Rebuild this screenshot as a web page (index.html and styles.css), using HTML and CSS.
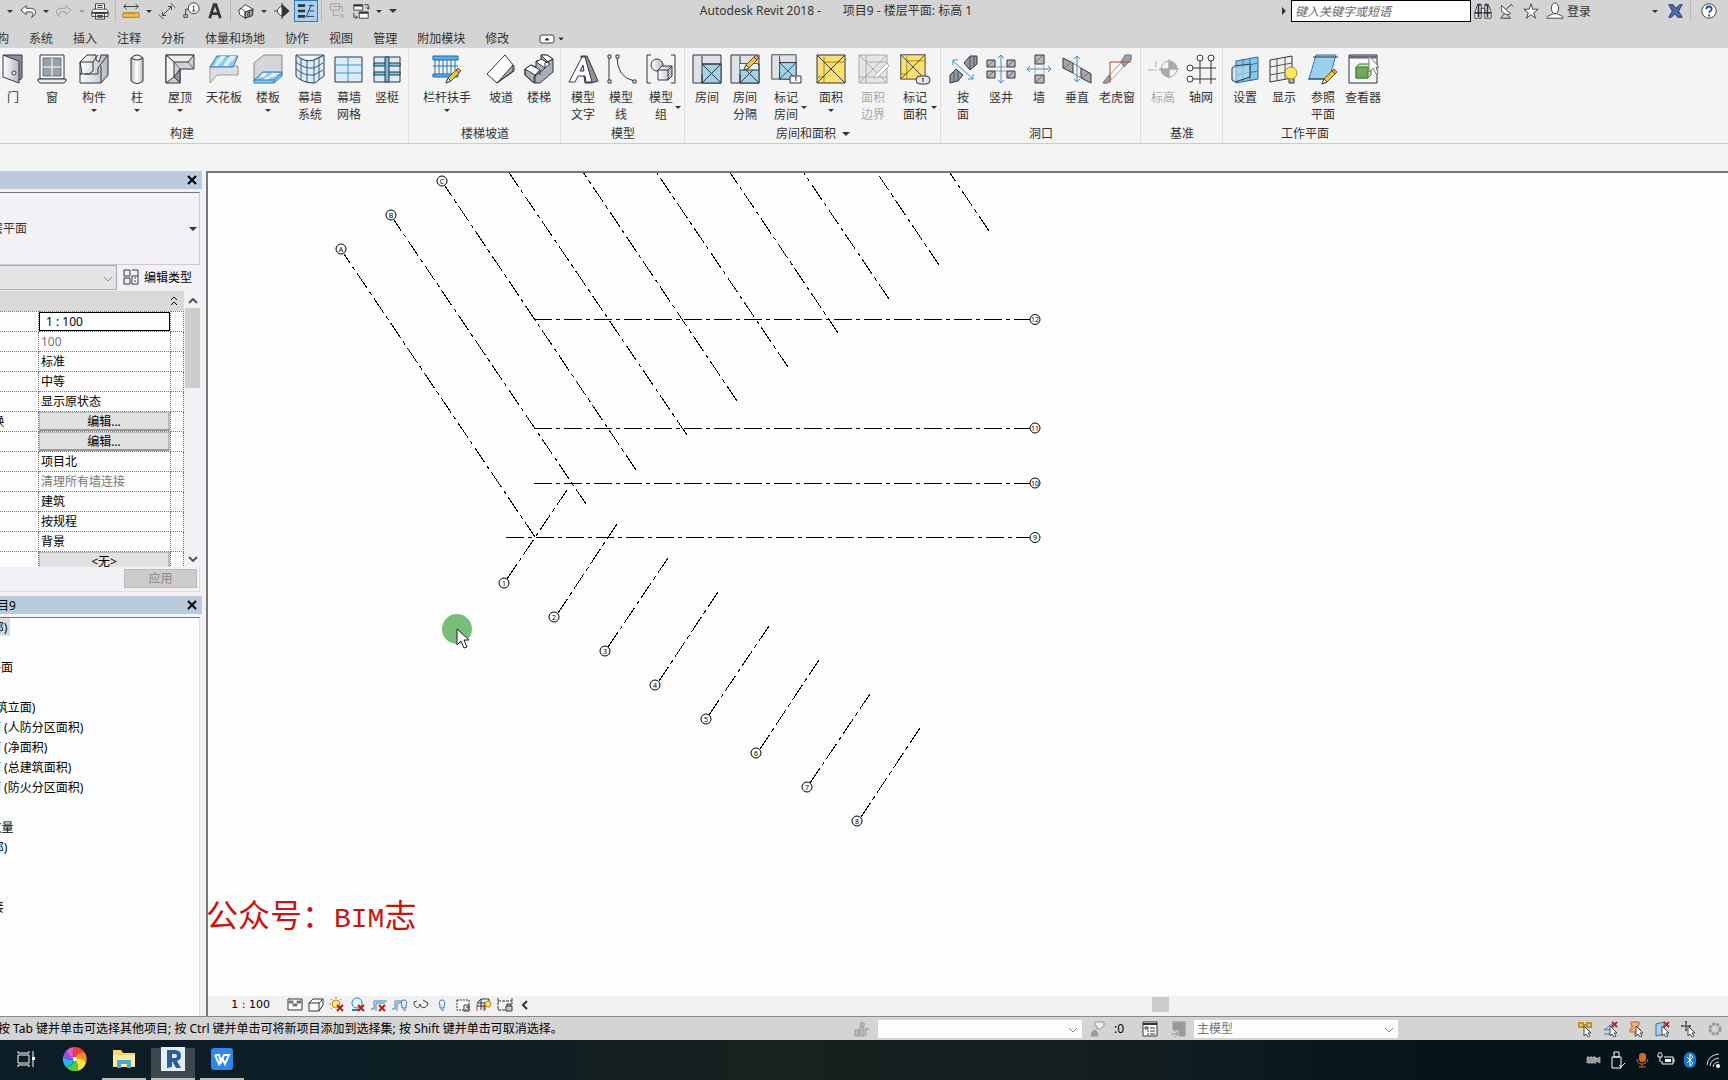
FILE: index.html
```
<!DOCTYPE html>
<html lang="zh-CN">
<head>
    <meta charset="UTF-8">
    <meta name="viewport" content="width=device-width, initial-scale=1.0">
    <title>Autodesk Revit 2018</title>
    <link rel="stylesheet" href="styles.css">
</head>
<body>
    <header class="titlebar">
        <div class="quick-access">
            <button class="drop" aria-label="打开选项"></button>
            <button class="quick" aria-label="放弃"><svg viewBox="0 0 20 20"><path d="M8 4L2 9l6 5v-3h5c3 0 3 3 1 6 6-3 6-10-1-10H8z" fill="#fff"/></svg></button>
            <button class="drop" aria-label="放弃选项"></button>
            <button class="quick faded" aria-label="重做"><svg viewBox="0 0 20 20"><path d="M12 4l6 5-6 5v-3H7c-3 0-3 3-1 6-6-3-6-10 1-10h5z"/></svg></button>
            <button class="drop faded" aria-label="重做选项"></button>
            <button class="quick" aria-label="打印"><svg viewBox="0 0 20 20"><path d="M5 8V2h10v6M3 8h14l2 2v6H1v-6zM5 13h10v6H5z" fill="#fff"/><path d="M1 12h18" stroke-width="2"/><path d="M7 4h6M7 6h6M7 15h6M7 17h6"/></svg></button>
            <i class="divider"></i>
            <button class="quick" aria-label="测量"><svg viewBox="0 0 20 20"><path d="M2 5h16M5 2L2 5l3 3M15 2l3 3-3 3"/><path d="M1 12h18v5H1z" fill="#f5c33b" stroke="#a97613"/><path d="M5 12v2M8 12v2M11 12v2M14 12v2" stroke="#a97613"/></svg></button>
            <button class="drop" aria-label="测量选项"></button>
            <button class="quick" aria-label="对齐尺寸标注"><svg viewBox="0 0 20 20"><path d="M5 15L15 5M5 11v4h4M11 5h4v4M1 14l5 5M14 1l5 5"/></svg></button>
            <button class="quick" aria-label="按类别标记"><svg viewBox="0 0 20 20"><circle cx="13" cy="7" r="6" fill="#fff"/><path d="M7 8H4v6M2 14h4v3H2zM12 5l1-1v6M11 10h4"/></svg></button>
            <button class="quick" aria-label="文字"><svg viewBox="0 0 20 20"><path d="M4 18L9 3h2l5 15M6 13h8" stroke-width="3"/></svg></button>
            <i class="divider"></i>
            <button class="quick" aria-label="三维视图"><svg viewBox="0 0 20 20"><path d="M2 9l7-6 9 5-1 7-8 3-6-4z" fill="#fff"/><path d="M9 11l8-2v6l-8 3z" fill="#a9b0bb"/><path d="M9 18v-7l9-3M9 11L5 7l-3 2M12 16v-4l2-1v5"/></svg></button>
            <button class="drop" aria-label="三维视图选项"></button>
            <button class="quick" aria-label="剖面"><svg viewBox="0 0 20 20"><path d="M10 3l8 7-8 7z" fill="#30353b"/><circle cx="10" cy="10" r="5" fill="#fff"/><path d="M10 5a5 5 0 0 1 0 10z" fill="#30353b"/><path d="M1 10h4M10 1v4M10 15v4"/></svg></button>
            <button class="quick pressed" aria-label="细线"><svg viewBox="0 0 20 20"><path d="M1 4h8M1 10h8M1 16h8" stroke-width="3"/><path d="M10 17l6-14M13 4h6M12 10h7M11 16h8"/></svg></button>
            <i class="divider"></i>
            <button class="quick faded" aria-label="关闭隐藏窗口"><svg viewBox="0 0 20 20"><path d="M3 2h10v7H3zM6 5h10v6M6 9v6h6M13 13l5 5M18 13l-5 5"/></svg></button>
            <button class="quick" aria-label="切换窗口"><svg viewBox="0 0 20 20"><path d="M2 3h10v6H2zM8 11h10v7H8z" fill="#fff"/><path d="M2 4h10M8 12h10" stroke-width="2"/><path d="M14 3h4v5M2 12v5h4M16 6l2 2 2-2M4 15l2 2-2 2"/></svg></button>
            <button class="drop" aria-label="切换窗口选项"></button>
            <button class="drop wide" aria-label="自定义快速访问工具栏"></button>
        </div>
        <div class="window-title">Autodesk Revit 2018 -&nbsp;&nbsp;&nbsp;&nbsp;&nbsp;&nbsp; 项目9 - 楼层平面: 标高 1</div>
        <div class="infocenter">
            <button class="expand" aria-label="折叠"></button>
            <input class="search" type="text" placeholder="键入关键字或短语" aria-label="搜索">
            <button class="quick" aria-label="搜索"><svg viewBox="0 0 20 20"><path d="M1 11l3-8h4v15H1zM12 3h4l3 8v7h-7zM8 7h4v5H8z" fill="#fff"/><path d="M1 12h7M12 12h7M5 4v13M15 4v13M4 3h4M12 3h4" stroke-width="2"/></svg></button>
            <button class="quick" aria-label="通讯中心"><svg viewBox="0 0 20 20"><path d="M4 4c-2 7 4 12 10 9z" fill="#fff"/><path d="M9 8l6-5M14 2l3 3M7 13l-4 5h11l-4-4"/></svg></button>
            <button class="quick" aria-label="收藏夹"><svg viewBox="0 0 20 20"><path d="M10 2l2 6h6l-5 4 2 6-5-4-5 4 2-6-5-4h6z" fill="#fff"/></svg></button>
            <button class="sign-in"><svg viewBox="0 0 20 20"><path d="M1 18c1-4 5-3 7-5h4c2 2 6 1 7 5z" fill="#fff"/><ellipse cx="10" cy="7" rx="4" ry="6" fill="#fff"/></svg>登录</button>
            <button class="drop" aria-label="登录选项"></button>
            <button class="quick" aria-label="Exchange"><svg viewBox="0 0 20 20"><path d="M3 3h5l3 4 4-4h3l-4 7 4 7h-5l-3-4-4 4H3l4-7z" fill="#4f6ca8" stroke="#22396d"/></svg></button>
            <i class="divider"></i>
            <button class="quick help" aria-label="帮助"><svg viewBox="0 0 20 20"><circle cx="10" cy="10" r="8" fill="#fff"/><path d="M7 8c0-4 6-4 6 0 0 2-3 2-3 4M10 14v2" stroke="#234a91" stroke-width="2"/></svg></button>
        </div>
    </header>

    <nav class="tabs">
        <a href="#">结构</a>
        <a href="#">系统</a>
        <a href="#">插入</a>
        <a href="#">注释</a>
        <a href="#">分析</a>
        <a href="#">体量和场地</a>
        <a href="#">协作</a>
        <a href="#">视图</a>
        <a href="#">管理</a>
        <a href="#">附加模块</a>
        <a href="#">修改</a>
        <button class="minimize" aria-label="最小化功能区"><svg viewBox="0 0 24 12"><rect x="1" y="2" width="14" height="8" rx="2" fill="#fff" stroke="#444"/><path d="M6 7l2-2 2 2z" fill="#333"/><path d="M20 5h4l-2 2z" fill="#333"/></svg></button>
    </nav>

    <!-- ribbon -->
    <div class="ribbon">
        <section class="panel first">
            <div class="tools">
                <button class="tool"><svg viewBox="0 0 32 32"><path d="M7 2h18v23l-2 2-16-3z" fill="#8b919c"/><path d="M6 2l16 6v22L6 24z" fill="url(#metal)"/><circle cx="17" cy="20" r="2" fill="#fff"/></svg>门</button>
                <button class="tool w40"><svg viewBox="0 0 32 32"><path d="M4 2h24v24H4z" fill="#fff"/><path d="M7 5h18v18H7z" fill="#9aa1ae" stroke="#666e7c"/><path d="M16 5v18M7 14h18" stroke="#fff"/><path d="M2 26h28v2l-2 2H4l-2-2z" fill="#eee"/></svg>窗</button>
                <button class="tool w44"><svg viewBox="0 0 32 32"><path d="M2 9l7-7h9v5l3 2 2-7h7v20l-7 8H2v-9l2-1z" fill="url(#metal)"/><path d="M2 9h13v9l-4 3H2zM15 9l5-7M20 15l9-12M20 15v6H7M23 30V13" fill="none"/></svg>构件<b></b></button>
                <button class="tool w42"><svg viewBox="0 0 32 32"><path d="M10 5q6-6 12 0v23q-6 5-12 0z" fill="url(#steel)"/><path d="M10 5q6 4 12 0"/></svg>柱<b></b></button>
                <button class="tool w44"><svg viewBox="0 0 32 32"><path d="M2 2h28v14H16v14H2z" fill="#d0d2d7"/><path d="M2 2l8 7h14l6-7z" fill="#eee"/><path d="M2 2l8 7v15l-8 6z" fill="#f5f5f6"/><path d="M24 9l6 7M10 24l6 6M10 9l6 7" stroke="#666"/><path d="M10 24l6-8v14z" fill="#8e949d"/></svg>屋顶<b></b></button>
                <button class="tool w44"><svg viewBox="0 0 32 32"><path d="M2 13h28v9H9l-7 8z" fill="#dedfe4" stroke="#999"/><path d="M2 14l7-11h21l-5 11z" fill="#8ecae9" stroke="#2f79b7"/><path d="M8 8l5-5h5l-4 5zM18 8l4-5h6l-3 5zM6 13l3-5h5l-4 5zM15 13l3-5h5l-3 5z" fill="#d7effa" stroke="none"/></svg>天花板</button>
                <button class="tool w44"><svg viewBox="0 0 32 32"><path d="M2 10l10-8h18v18H12l-10 8z" fill="#d4d6db" stroke="#888"/><path d="M2 27l9-8h19v4l-8 7H2z" fill="#8ecae9" stroke="#2f79b7"/><path d="M7 24l4-4h5l-4 4zM16 24l4-4h7l-5 4zM11 27l3-3h5l-3 3z" fill="#e3f4fb" stroke="none"/><path d="M2 27h20l8-7M22 27v3" stroke="#2f79b7"/></svg>楼板<b></b></button>
                <button class="tool w40"><svg viewBox="0 0 32 32"><path d="M2 2q9 8 18 5l10-5v21l-9 7Q8 30 2 23z" fill="#d9ecf7"/><path d="M2 2h28L20 7v23M2 9q8 7 18 6M2 16q8 7 18 6M7 5v22M13 8v21M20 15l9-5M20 22l9-5M25 5v22" stroke="#36607f"/></svg>幕墙<br>系统</button>
                <button class="tool"><svg viewBox="0 0 32 32"><path d="M2 4h27v25H2z" fill="#d9ecf7"/><path d="M2 12h27M2 20h27M15 4v25" stroke="#3f93cb"/></svg>幕墙<br>网格</button>
                <button class="tool"><svg viewBox="0 0 32 32"><path d="M3 4h26v25H3z" fill="#d9ecf7"/><path d="M3 10h26v3H3zM3 19h26v3H3z" fill="#80c5e9"/><path d="M14 4h4v25h-4z" fill="#6eb9e2"/></svg>竖梃</button>
            </div>
            <h2>构建</h2>
        </section>
        <section class="panel">
            <div class="tools">
                <button class="tool w70"><svg viewBox="0 0 32 32"><path d="M2 3h25v4H2zM2 21h25v3H2z" fill="#57b0e5" stroke="#1e69a1"/><path d="M2 13h25M4 7v14M8 7v14M12 7v14M16 7v14M20 7v14M24 7v14" stroke="#1e75b1"/><use href="#pencil" x="14" y="14"/></svg>栏杆扶手<b></b></button>
                <button class="tool"><svg viewBox="0 0 32 32"><path d="M2 21L20 2l9 11v5L12 30z" fill="#fff"/><path d="M12 30L28 12v6z" fill="#a7abb3"/></svg>坡道</button>
                <button class="tool"><svg viewBox="0 0 32 32"><path d="M2 16l6-4 5 2V8l5-1V2h6l6 4v13L17 30h-6l-9-8z" fill="#aaafb8"/><path d="M2 16l6-4 9 5-5 5zM13 9l5-3 9 5-5 4zM18 2h6l6 4-5 3z" fill="#fff"/><path d="M2 16v6l9 8v-6l11-9v-5l8-4M12 22v8M17 17v5"/></svg>楼梯</button>
            </div>
            <h2>楼梯坡道</h2>
        </section>
        <section class="panel">
            <div class="tools">
                <button class="tool"><svg viewBox="0 0 32 32"><path d="M14 3h6l11 25-7 2h-6z" fill="#8e949e"/><path d="M2 29L15 4h3l7 25h-6l-1-6h-7l-3 6z" fill="#fff"/><path d="M13 18l3-6 1 6z" fill="#ccd"/></svg>模型<br>文字</button>
                <button class="tool"><svg viewBox="0 0 32 32"><path d="M4 4v24M12 4q0 20 17 24"/><path d="M3 2h3v3H3zM3 27h3v3H3zM11 2h3v3h-3zM28 27h3v3h-3z" fill="#fff"/></svg>模型<br>线</button>
                <button class="tool w42"><svg viewBox="0 0 32 32"><path d="M6 2H2v28h4M26 2h4v28h-4"/><circle cx="12" cy="12" r="6" fill="url(#metal)"/><path d="M13 17l4-4h10v10l-4 4H13z" fill="url(#metal)"/><path d="M13 17h10v10M23 17l4-4"/></svg>模型<br>组<b class="side"></b></button>
            </div>
            <h2>模型</h2>
        </section>
        <section class="panel">
            <div class="tools">
                <button class="tool"><svg viewBox="0 0 32 32"><use href="#room"/></svg>房间</button>
                <button class="tool"><svg viewBox="0 0 32 32"><use href="#room"/><path d="M11 11h18v6H11z" fill="#e9eef5" stroke="none"/><path d="M11 17h19"/><use href="#pencil" x="14" y="1"/></svg>房间<br>分隔</button>
                <button class="tool w44"><svg viewBox="0 0 32 32"><g transform="scale(.87)"><use href="#room"/></g><path d="M20 23h11v7H20z" fill="#fff"/><path d="M25 25l1-1v4"/></svg>标记<br>房间<b class="side"></b></button>
                <button class="tool w46"><svg viewBox="0 0 32 32"><use href="#area"/></svg>面积<b></b></button>
                <button class="tool disabled" disabled><svg viewBox="0 0 32 32"><path d="M2 2h28v28H2z" fill="#e5e5e5"/><path d="M2 2l28 28M30 2L2 30M9 2v28M9 9h21M2 24h28"/><path d="M18 22l12-12 2 3-11 11-4 1z" fill="#fff"/></svg>面积<br>边界</button>
                <button class="tool w46"><svg viewBox="0 0 32 32"><g transform="scale(.87)"><use href="#area"/></g><rect x="17" y="23" width="14" height="8" rx="4" fill="#e2e4ea"/><path d="M23 26l1-1v4"/></svg>标记<br>面积<b class="side"></b></button>
            </div>
            <h2>房间和面积<b></b></h2>
        </section>
        <section class="panel">
            <div class="tools">
                <button class="tool"><svg viewBox="0 0 32 32"><path d="M17 10l6-7h7v8l-7 6zM3 22l6-6 7 6-5 6-8 2z" fill="#9297a2"/><path d="M23 4v12M27 3v10M7 19v10M11 18v9" stroke="#555"/><path d="M6 8l20 18M11 7H6v5M26 21v5h-5" class="arrow"/></svg>按<br>面</button>
                <button class="tool"><svg viewBox="0 0 32 32"><path d="M2 7h8v7H2zM22 7h8v7h-8zM2 18h8v7H2zM22 18h8v7h-8z" fill="#b5bac3"/><path d="M3 13l6-6M23 13l6-6M3 24l6-6M23 24l6-6" stroke="#666"/><path d="M10 14h12M10 18h12" stroke="#999"/><path d="M16 3v26M13 5l3-3 3 3M13 27l3 3 3-3" class="arrow"/></svg>竖井</button>
                <button class="tool"><svg viewBox="0 0 32 32"><path d="M12 2h9v9h-9zM12 22h9v8h-9z" fill="#b5bac3"/><path d="M12 10l8-8M12 30l8-8" stroke="#666"/><path d="M12 11v11M21 11v11" stroke="#aaa"/><path d="M5 16h23M7 13l-3 3 3 3M25 13l3 3-3 3" class="arrow"/></svg>墙</button>
                <button class="tool"><svg viewBox="0 0 32 32"><path d="M2 5l10 5v10L2 15zM20 15l10 6v9l-10-5z" fill="#a3a8b3"/><path d="M3 15l8-6M21 25l8-6M12 10l8 5M12 20l8 5" stroke="#777"/><path d="M16 3v26M13 6l3-3 3 3M13 26l3 3 3-3" class="arrow"/></svg>垂直</button>
                <button class="tool w42"><svg viewBox="0 0 32 32"><path d="M2 30L24 5l6-3v4L7 30z" fill="#fff" stroke="#999"/><path d="M20 9l4-7h6v5l-7 7zM2 30l6-8 2 3-4 5z" fill="#9ba0aa" stroke="#777"/><path d="M9 30V9h21" stroke="#b2483d"/></svg>老虎窗</button>
            </div>
            <h2>洞口</h2>
        </section>
        <section class="panel">
            <div class="tools">
                <button class="tool disabled" disabled><svg viewBox="0 0 32 32"><path d="M1 17h6M9 8v6M9 16v2M12 17h4"/><circle cx="22" cy="16" r="8"/><path d="M22 8a8 8 0 0 1 8 8h-8zM22 24a8 8 0 0 1-8-8h8z" fill="#aaa"/><path d="M22 6v20M12 16h20"/></svg>标高</button>
                <button class="tool"><svg viewBox="0 0 32 32"><path d="M15 7v24M26 7v24M8 15h23M8 26h23"/><path d="M12 5a3 3 0 1 0 6 0a3 3 0 1 0-6 0M23 5a3 3 0 1 0 6 0a3 3 0 1 0-6 0M2 15a3 3 0 1 0 6 0a3 3 0 1 0-6 0M2 26a3 3 0 1 0 6 0a3 3 0 1 0-6 0" fill="#fff"/></svg>轴网</button>
            </div>
            <h2>基准</h2>
        </section>
        <section class="panel last">
            <div class="tools">
                <button class="tool"><svg viewBox="0 0 32 32"><path d="M7 8l22-4v22L7 30z" fill="#8bc5e9" stroke="#2667a0"/><path d="M7 15l22-5M7 22l22-4M14 7v21M21 5v22" stroke="#347bb4"/><path d="M3 15l3-2 15-2v13L6 29l-3-2z" fill="#b9dff5" fill-opacity=".6"/></svg>设置</button>
                <button class="tool w40"><svg viewBox="0 0 32 32"><path d="M2 7l22-4v22L2 29z" fill="#eef0f3"/><path d="M2 14l22-4M2 22l22-4M9 5v22M17 4v22" stroke="#555"/><path d="M21 25h5v5h-5z" fill="#bbb"/><circle cx="23" cy="20" r="6" fill="#ffe95e" stroke="#a98c16"/></svg>显示</button>
                <button class="tool"><svg viewBox="0 0 32 32"><path d="M9 2h20l-7 24H2z" fill="#9bd0ec" stroke="#2f79b7"/><path d="M6 4h25M1 26h18"/><use href="#pencil" x="14" y="15"/></svg>参照<br>平面</button>
                <button class="tool w42"><svg viewBox="0 0 32 32"><path d="M2 2h28v28H2z" fill="#f7f7f9"/><path d="M2 4h28" stroke-width="3" stroke="#666b78"/><path d="M9 14l3-3h12v11l-3 3H9z" fill="#c9e6b8" stroke="#3f7d2f"/><path d="M9 14h12v11H9z" fill="#70a95a" stroke="#3f7d2f"/><path d="M22 3v16l4-4 3 6 2-1-2-6h3z" fill="#fff" stroke="#777"/></svg>查看器</button>
            </div>
            <h2>工作平面</h2>
        </section>
    </div>

    <main class="workspace">
        <aside class="sidebar">
            <section class="palette properties">
                <div class="palette-title"><span class="palette-name"></span><button class="close" aria-label="关闭属性"><svg viewBox="0 0 10 10"><path d="M1 1l8 8M9 1L1 9"/></svg></button></div>
                <div class="type-box"><span>楼层平面</span><b></b></div>
                <div class="type-row">
                    <div class="combo grey"><select aria-label="类型"><option></option></select><svg viewBox="0 0 10 6"><path d="M1 1l4 4 4-4"/></svg></div>
                    <button class="edit-type"><svg viewBox="0 0 16 16"><path d="M1 1h6v6H1zM9 1h6v6M1 9h6v6H1z"/><path d="M9 7h6v8H9z" fill="#fff"/><path d="M11 9h2M11 12h2"/></svg>编辑类型</button>
                </div>
                <div class="grid-wrap">
                    <table class="grid">
                        <colgroup><col class="name"><col class="value"><col class="link"></colgroup>
                        <tr class="category"><th colspan="3"><svg viewBox="0 0 8 10"><path d="M1 4l3-3 3 3M1 9l3-3 3 3"/></svg></th></tr>
                        <tr><td></td><td><input type="text" value="1 : 100" aria-label="视图比例"></td><td></td></tr>
                        <tr><td></td><td class="dim">100</td><td></td></tr>
                        <tr><td></td><td>标准</td><td></td></tr>
                        <tr><td></td><td>中等</td><td></td></tr>
                        <tr><td></td><td>显示原状态</td><td></td></tr>
                        <tr><td>可见性/图形替换</td><td><button>编辑...</button></td><td></td></tr>
                        <tr><td></td><td><button>编辑...</button></td><td></td></tr>
                        <tr><td></td><td>项目北</td><td></td></tr>
                        <tr><td></td><td class="dim">清理所有墙连接</td><td></td></tr>
                        <tr><td></td><td>建筑</td><td></td></tr>
                        <tr><td></td><td>按规程</td><td></td></tr>
                        <tr><td></td><td>背景</td><td></td></tr>
                        <tr><td></td><td><button>&lt;无&gt;</button></td><td></td></tr>
                    </table>
                    <div class="scrollbar">
                        <svg viewBox="0 0 10 6"><path d="M1 5l4-4 4 4"/></svg>
                        <div class="thumb"></div>
                        <svg viewBox="0 0 10 6"><path d="M1 1l4 4 4-4"/></svg>
                    </div>
                </div>
                <div class="apply-row"><button disabled>应用</button></div>
            </section>
            <section class="palette browser">
                <div class="palette-title"><span class="palette-name">项目浏览器 - 项目9</span><button class="close" aria-label="关闭项目浏览器"><svg viewBox="0 0 10 10"><path d="M1 1l8 8M9 1L1 9"/></svg></button></div>
                <ul class="tree">
                    <li><span class="selected">视图 (全部)</span></li>
                    <li></li>
                    <li class="child">天花板平面</li>
                    <li></li>
                    <li class="child">立面 (建筑立面)</li>
                    <li class="child">面积平面 (人防分区面积)</li>
                    <li class="child">面积平面 (净面积)</li>
                    <li class="child">面积平面 (总建筑面积)</li>
                    <li class="child">面积平面 (防火分区面积)</li>
                    <li></li>
                    <li>明细表/数量</li>
                    <li>图纸 (全部)</li>
                    <li></li>
                    <li></li>
                    <li>Revit 链接</li>
                </ul>
            </section>
        </aside>

        <section class="view">
            <div class="drawing">
                <!-- axis grid in window coordinates -->
                <svg width="1520" height="823" viewBox="208 173 1520 823">
                    <g class="axis">
                        <path d="M534 319.500H1030M534 428.500H1030M534 483.500H1030M506 537.500H1030"/>
                        <path d="M535 537L344 254M586 504L394 220M636 470L445 186M687 435L495 152M737 401L546 117M788 367L596 83M838 333L647 49M889 299L697 15M939 265L748 -19M989 231L798 -53"/>
                        <path d="M567 490L507 579M617 524L558 613M668 558L608 647M718 592L659 681M769 626L709 715M819 660L760 749M870 694L810 783M920 728L861 817"/>
                    </g>
                    <g class="bubble">
                        <circle cx="341" cy="249" r="5"/><circle cx="391" cy="215" r="5"/><circle cx="442" cy="181" r="5"/>
                        <circle cx="1035" cy="319.500" r="5"/><circle cx="1035" cy="428" r="5"/><circle cx="1035" cy="483" r="5"/><circle cx="1035" cy="537.500" r="5"/>
                        <circle cx="504" cy="583" r="5"/><circle cx="554" cy="617" r="5"/><circle cx="605" cy="651" r="5"/><circle cx="655" cy="685" r="5"/><circle cx="706" cy="719" r="5"/><circle cx="756" cy="753" r="5"/><circle cx="807" cy="787" r="5"/><circle cx="857" cy="821" r="5"/>
                    </g>
                    <g class="mark">
                        <text x="341" y="252">A</text><text x="391" y="218">B</text><text x="442" y="184">C</text>
                        <text x="1035" y="322">12</text><text x="1035" y="431">11</text><text x="1035" y="486">10</text><text x="1035" y="540">9</text>
                        <text x="504" y="586">1</text><text x="554" y="620">2</text><text x="605" y="654">3</text><text x="655" y="688">4</text><text x="706" y="722">5</text><text x="756" y="756">6</text><text x="807" y="790">7</text><text x="857" y="824">8</text>
                    </g>
                    <circle cx="457" cy="629" r="15" fill="#7abd7a" stroke="none"/>
                    <path d="M457 629v16l4-4 3 7 3-1-3-7h5z" fill="#fff" stroke="#222"/>
                </svg>
                <p class="watermark">公众号：<span>BIM</span>志</p>
            </div>
            <div class="view-bar">
                <button class="scale">1 : 100</button>
                <div class="view-tools">
                    <button aria-label="详细程度"><svg viewBox="0 0 16 16"><path d="M1 2h14v11H1z" fill="#fff"/><path d="M2 4h4v2H2zM10 4h4v2h-4zM6 7h4v2H6z" fill="#777" stroke="#777"/></svg></button>
                    <button aria-label="视觉样式"><svg viewBox="0 0 16 16"><path d="M1 6l4-4h10v6l-4 6H1zM1 6h10v8M11 6l4-4" fill="#fff"/></svg></button>
                    <button aria-label="日光路径"><svg viewBox="0 0 16 16"><circle cx="7" cy="7" r="4" fill="#ffe97a" stroke="#b88b16"/><path d="M7 0v2M0 7h2M2 2l1 1M12 2l-1 1M2 12l1-1" stroke="#b88b16"/><use href="#cross"/></svg></button>
                    <button aria-label="阴影"><svg viewBox="0 0 16 16"><circle cx="7" cy="6" r="5" fill="#e5f4fc" stroke="#3b7aa5"/><path d="M2 13h8" stroke="#3b7aa5" stroke-width="2"/><use href="#cross"/></svg></button>
                    <button aria-label="裁剪视图"><svg viewBox="0 0 16 16"><path d="M0 12h3V4h13M5 14V6h9" stroke="#3484ae"/><use href="#cross"/></svg></button>
                    <button aria-label="裁剪区域"><svg viewBox="0 0 16 16"><path d="M0 12h3V4h9M5 14V6h5" stroke="#3484ae"/><use href="#bulb" x="4"/></svg></button>
                    <button aria-label="临时隐藏"><svg viewBox="0 0 16 16"><path d="M1 5c0 7 6 7 6 2 1 6 7 4 8-1l-5-3M1 5l3-1"/></svg></button>
                    <button aria-label="显示隐藏的图元"><svg viewBox="0 0 16 16"><use href="#bulb"/></svg></button>
                    <button aria-label="临时视图属性"><svg viewBox="0 0 16 16"><path d="M2 3h12v10H2z" stroke-dasharray="2 1" fill="#fff"/><path d="M9 8h5v6H9zM11 10h2v2"/></svg></button>
                    <button aria-label="分析模型"><svg viewBox="0 0 16 16"><path d="M1 6l4-4h8v8M1 6h8v7M5 2v11M1 9h12"/><path d="M1 7v7M4 9h5M8 8v6" stroke="#a93c3c"/><circle cx="12" cy="7" r="3" fill="#ffe15a" stroke="#b88b16"/></svg></button>
                    <button aria-label="约束"><svg viewBox="0 0 16 16"><path d="M1 1v12M15 1v6M1 4h14M1 13h8" stroke-dasharray="3 1"/><path d="M9 9h6v5H9zM10 9V7h4v2" fill="#ccc"/></svg></button>
                    <button aria-label="滚动"><svg viewBox="0 0 16 16"><path d="M9 4L5 8l4 4" stroke-width="2"/></svg></button>
                </div>
                <div class="h-scroll"><div class="h-thumb"></div></div>
            </div>
        </section>
    </main>

    <footer class="status">
        <p class="hint">按 Tab 键并单击可选择其他项目; 按 Ctrl 键并单击可将新项目添加到选择集; 按 Shift 键并单击可取消选择。</p>
        <svg class="pale" viewBox="0 0 16 16"><path d="M1 9h4v6H1zM6 6h4v9H6zM12 8v7M11 9l2-2 2 2M8 1l3 2-3 3-2-3z" fill="#bbb"/></svg>
        <div class="combo"><select aria-label="工作集" disabled><option></option></select><svg viewBox="0 0 10 6"><path d="M1 1l4 4 4-4"/></svg></div>
        <svg class="pale" viewBox="0 0 16 16"><path d="M5 1h9v4l-4 3H7V5H5z" fill="#eee"/><path d="M2 11l3-2 2 2 1 4H1z" fill="#999"/></svg>
        <span class="count">:0</span>
        <svg class="strong" viewBox="0 0 16 16"><path d="M1 1h14v14H1z" fill="#fff"/><path d="M1 3h14" stroke-width="2"/><path d="M3 6h3v2H3zM8 7h5M5 10h2M8 10h5M5 13h2M8 13h5"/></svg>
        <svg class="pale" viewBox="0 0 16 16"><path d="M3 1h12v14H9V9H3z" fill="#999"/><path d="M1 13h6M5 10l3 3-3 3"/></svg>
        <div class="combo"><select aria-label="设计选项" disabled><option>主模型</option></select><svg viewBox="0 0 10 6"><path d="M1 1l4 4 4-4"/></svg></div>
        <div class="select-tools">
            <button aria-label="选择链接"><svg viewBox="0 0 16 16"><path d="M2 2h4v4H2zM10 2h4v4h-4zM5 4h6" stroke="#c19317" stroke-width="2"/><use href="#pointer"/></svg></button>
            <button aria-label="选择基线图元"><svg viewBox="0 0 16 16"><path d="M1 9l8-6v5zM1 13h9" fill="#d8edf8" stroke="#3a7cab"/><path d="M9 1l5 5M14 1L9 6" stroke="#b52a2f" stroke-width="2"/><use href="#pointer"/></svg></button>
            <button aria-label="选择锁定图元"><svg viewBox="0 0 16 16"><path d="M2 1h8v3H9v4h2v3H1V8h2V4H2zM6 11v5" fill="#efb184" stroke="#b86426"/><use href="#pointer"/></svg></button>
            <button aria-label="按面选择图元"><svg viewBox="0 0 16 16"><path d="M1 3l8-2v12l-8 2z" fill="#a7cfea" stroke="#35739f"/><path d="M9 1l5 5M14 1L9 6" stroke="#b52a2f" stroke-width="2"/><use href="#pointer"/></svg></button>
            <button aria-label="选择时拖曳"><svg viewBox="0 0 16 16"><path d="M5 0v10M0 5h10M4 1h2M4 9h2M1 4v2M9 4v2"/><use href="#pointer"/></svg></button>
            <button aria-label="后台进程"><svg viewBox="0 0 16 16"><circle cx="8" cy="8" r="5" stroke="#999" stroke-width="3" stroke-dasharray="3 1"/></svg></button>
        </div>
    </footer>

    <div class="taskbar">
        <div class="apps">
            <button class="app" aria-label="任务视图"><svg viewBox="0 0 24 24"><path d="M4 8h11v8H4zM4 4v2h11V4M4 20v-2h11v2M19 4v16" stroke="#fff"/><path d="M18 10h3v3h-3z" fill="#fff"/></svg></button>
            <button class="app" aria-label="浏览器"><svg viewBox="0 0 24 24">
                <path d="M12 12C3 12 0 8 3 4A12 12 0 0 1 11 0Q8 6 12 12z" fill="#e85bd0"/>
                <path d="M12 12Q8 4 11 0A12 12 0 0 1 22 6Q16 5 12 12z" fill="#f33c3c"/>
                <path d="M12 12Q16 4 22 6A12 12 0 0 1 23 16Q19 11 12 12z" fill="#ff8d1e"/>
                <path d="M12 12Q20 10 23 16A12 12 0 0 1 14 24Q16 18 12 12z" fill="#ffe23b"/>
                <path d="M12 12Q17 20 14 24A12 12 0 0 1 3 20Q10 19 12 12z" fill="#4ecb3f"/>
                <path d="M12 12Q8 20 3 20A12 12 0 0 1 0 10Q5 14 12 12z" fill="#27b6ee"/>
                <path d="M12 12Q4 14 0 10A12 12 0 0 1 4 3Q5 9 12 12z" fill="#8756dd"/>
                <circle cx="12" cy="12" r="2" fill="#fff"/></svg></button>
            <button class="app open" aria-label="文件资源管理器"><svg viewBox="0 0 24 24"><path d="M1 3h8l2 3h12v14H1z" fill="#f7d774"/><path d="M1 8h22v12H1z" fill="#ffe9a2"/><path d="M5 21v-8h14v8h-4v-4H9v4z" fill="#4baac8"/></svg></button>
            <button class="app open active" aria-label="Revit"><svg viewBox="0 0 24 24"><path d="M0 0h24v24H0z" fill="#e4eef9"/><path d="M6 3h8q6 0 6 6 0 4-4 5l4 7h-5l-4-7v6l-5 1z" fill="#285f98"/><path d="M11 7h3q2 0 2 2t-2 2h-3z" fill="#dce9f7"/></svg></button>
            <button class="app open" aria-label="WPS"><svg viewBox="0 0 24 24"><rect x="1" y="1" width="22" height="22" rx="3" fill="#2e86ee"/><path d="M5 8h4l2 7 3-7h5l-4 9-3-6M5 8l4 9 3-6" stroke="#fff" stroke-width="2"/></svg></button>
        </div>
        <div class="tray">
            <svg viewBox="0 0 18 18"><path d="M2 6h9v6H2zM11 8l4-2v6l-4-2" fill="#999" stroke="#bbb" stroke-dasharray="2 1"/></svg>
            <svg viewBox="0 0 18 18"><path d="M5 1h5v5H5zM3 6h9v11H3z" stroke="#fff"/><path d="M10 14l2 2 4-4" stroke="#fff"/></svg>
            <svg viewBox="0 0 18 18"><rect x="6" y="2" width="7" height="9" rx="3" fill="#d86820"/><path d="M4 8q0 5 5 5t6-5M9 13v3M6 16h7" stroke="#d86820"/></svg>
            <svg viewBox="0 0 18 18"><path d="M7 6h9v7H5v-3M16 8h1v3h-1" stroke="#fff"/><path d="M8 8h6v3H8z" fill="#fff"/><path d="M1 3v3h4V3M3 6v5M2 1v2M4 1v2" stroke="#fff"/></svg>
            <svg viewBox="0 0 18 18"><rect x="3" y="1" width="12" height="16" rx="6" fill="#1677cf"/><path d="M6 6l6 6-3 3V3l3 3-6 6" stroke="#fff"/></svg>
            <svg viewBox="0 0 18 18"><path d="M2 14Q3 4 14 3M5 15q1-7 9-8M8 16q1-5 6-5" stroke="#ddd"/><circle cx="13" cy="15" r="2" fill="#fff"/></svg>
        </div>
    </div>

    <!-- shared drawings -->
    <svg class="defs" aria-hidden="true">
        <defs>
            <linearGradient id="metal"><stop offset="0" stop-color="#fff"/><stop offset="1" stop-color="#b4b8c1"/></linearGradient>
            <linearGradient id="steel"><stop offset="0" stop-color="#bbb"/><stop offset=".5" stop-color="#fff"/><stop offset="1" stop-color="#b8bcc4"/></linearGradient>
            <g id="pencil"><path d="M1 16l2-5L13 1l3 3L6 14z" fill="#f4c33c" stroke="#6b521c"/><path d="M1 16l2-5 3 3z" fill="#fff" stroke="#444"/><path d="M11 3l2-2 3 3-2 2z" fill="#d99" stroke="#6b521c"/></g>
            <g id="room"><path d="M2 2h28v28H2z" fill="#dfe1e9"/><path d="M11 11h19v19H11z" fill="#a4d2ea"/><path d="M11 3v8M11 21v9M11 11l19 19M30 11L11 30M11 11h19"/></g>
            <g id="area"><path d="M2 2h28v28H2z" fill="#fddf72"/><path d="M9 4v26M9 9h21M2 24h7" stroke="#a28528"/><path d="M2 2l28 28M30 2L2 30"/></g>
            <g id="cross"><path d="M8 8l6 6M14 8l-6 6" stroke="#a92020" stroke-width="2"/></g>
            <g id="bulb"><path d="M6 9q-2-6 2-6t2 6v2H6z" fill="#dff2fd" stroke="#3b7aa5"/><path d="M7 13h3" stroke="#3b7aa5"/></g>
            <g id="pointer"><path d="M7 5v10l2-2 2 3 2-1-2-3h3z" fill="#fff" stroke="#444"/></g>
        </defs>
    </svg>
</body>
</html>
```
FILE: styles.css
```
* {
    box-sizing: border-box;
}

body {
    font-family: "Noto Sans", "Noto Sans CJK SC", sans-serif;
    font-size: 12px;
    line-height: 17px;
    color: #333;
    margin: 0;
    height: 100vh;
    display: flex;
    flex-direction: column;
    overflow: hidden;
    background-color: #f4f4f4;
}

button, input, select {
    font: inherit;
    color: inherit;
    margin: 0;
    padding: 0;
    border: none;
    border-radius: 0;
    background: none;
}

p, h2, ul {
    margin: 0;
    padding: 0;
}

svg {
    display: block;
    fill: none;
    stroke: #30353b;
    flex: none;
}

.defs {
    position: absolute;
    width: 0;
    height: 0;
}

/* title bar */
.titlebar {
    display: flex;
    height: 24px;
    background-color: #d4d4d4;
}

.quick-access, .infocenter {
    display: flex;
    align-items: center;
    height: 22px;
}

.quick-access {
    padding-left: 4px;
}

.quick {
    display: flex;
    align-items: center;
    justify-content: center;
    width: 24px;
    height: 22px;
}

.quick svg, .sign-in svg {
    width: 18px;
    height: 18px;
}

.quick.pressed {
    background-color: #a8d0f5;
    border: 1px solid #3178b5;
}

.drop {
    width: 12px;
    height: 22px;
}

.drop::before, b::before {
    content: "";
    display: block;
    width: 0;
    margin: 0 auto;
    border: 3px solid transparent;
    border-top-color: #333;
    border-bottom: 0;
}

.drop.wide {
    width: 16px;
}

.drop.wide::before {
    border-width: 4px;
    border-bottom: 0;
}

.faded {
    opacity: 0.35;
}

.divider {
    width: 1px;
    height: 22px;
    margin: 0 3px;
    background-color: #bbb;
}

.window-title {
    flex: 1;
    padding-right: 6px;
    text-align: center;
    line-height: 22px;
}

.infocenter {
    padding-right: 4px;
}

.expand {
    width: 14px;
}

.expand::before {
    content: "";
    display: block;
    width: 0;
    margin-left: 5px;
    border: 4px solid transparent;
    border-left-color: #333;
    border-right: 0;
}

.search {
    width: 180px;
    height: 22px;
    padding: 0 3px;
    border: 1px solid #000;
    background-color: #fff;
}

.search::placeholder {
    font-style: italic;
    color: #666;
}

.sign-in {
    display: flex;
    align-items: center;
    gap: 3px;
    width: 104px;
    padding-left: 3px;
}

.infocenter .drop {
    width: 16px;
}

.help {
    width: 30px;
}

/* ribbon tabs */
.tabs {
    display: flex;
    height: 24px;
    margin-left: -25px;
    background-color: #d4d4d4;
}

.tabs a {
    padding: 0 10px;
    line-height: 29px;
    color: #333;
    text-decoration: none;
}

.minimize {
    margin-left: 20px;
}

.minimize svg {
    width: 24px;
    height: 12px;
    margin-top: 5px;
}

/* ribbon */
.ribbon {
    display: flex;
    height: 96px;
    margin-left: -45px;
    border-bottom: 1px solid #ccc;
}

.panel {
    display: flex;
    flex-direction: column;
    justify-content: space-between;
    padding: 5px 2px 1px 3px;
    border-right: 1px solid #ddd;
}

.panel.first .tools {
    padding-left: 36px;
}

.panel.last {
    border-right: none;
}

.panel h2 {
    display: flex;
    align-items: center;
    justify-content: center;
    gap: 6px;
    font-size: 12px;
    font-weight: normal;
    line-height: 17px;
}

.panel h2 b::before {
    border-width: 4px;
    border-bottom: 0;
}

.tools {
    display: flex;
    align-items: flex-start;
}

.tool {
    position: relative;
    width: 38px;
    text-align: center;
    white-space: nowrap;
}

.tool svg {
    width: 32px;
    height: 32px;
    margin: 0 auto 4px;
}

.tool b {
    display: block;
    height: 3px;
    margin-top: 3px;
}

.tool b.side {
    position: absolute;
    right: 1px;
    bottom: 14px;
    margin: 0;
}

.tool .arrow {
    stroke: #3f8fc4;
}

.tool.disabled {
    color: #aaa;
}

.tool.disabled svg {
    stroke: #aaa;
}

.w40 { width: 40px; }
.w42 { width: 42px; }
.w44 { width: 44px; }
.w46 { width: 46px; }
.w70 { width: 70px; }

/* work area */
.workspace {
    flex: 1;
    display: flex;
    min-height: 0;
    margin-top: 27px;
}

.sidebar {
    display: flex;
    flex-direction: column;
    gap: 4px;
    width: 206px;
    overflow: hidden;
    padding-right: 4px;
    color: #000;
    background-color: #f3f1f5;
}

.palette-title {
    display: flex;
    align-items: center;
    justify-content: space-between;
    height: 18px;
    padding-right: 5px;
    background-color: #b9cbdd;
}

.palette-name {
    margin-left: -85px;
    white-space: nowrap;
}

.close svg {
    width: 10px;
    height: 10px;
    stroke: #000;
    stroke-width: 2;
}

.type-box {
    display: flex;
    align-items: center;
    justify-content: space-between;
    height: 73px;
    margin: 3px 2px 0 0;
    padding-right: 2px;
    border: 1px solid #ccc;
    border-top: 1px solid #777;
    border-left: none;
    color: #333;
}

.type-box span {
    margin-left: -21px;
}

.type-box b::before {
    border-width: 4px;
    border-bottom: 0;
}

.type-row {
    display: flex;
    height: 26px;
    gap: 6px;
}

.combo {
    position: relative;
}

.combo select {
    appearance: none;
    display: block;
    width: 100%;
    height: 100%;
    padding: 0 3px;
    background-color: #fdfdfd;
    opacity: 1;
    color: #777;
}

.combo svg {
    position: absolute;
    right: 4px;
    top: 50%;
    width: 10px;
    height: 6px;
    margin-top: -2px;
    stroke: #888;
}

.combo.grey {
    width: 117px;
    height: 25px;
}

.combo.grey select {
    background-color: #e4e3e5;
    border: 1px solid #aaa;
    border-left: none;
}

.edit-type {
    display: flex;
    align-items: center;
    gap: 5px;
    height: 24px;
}

.edit-type svg {
    width: 16px;
    height: 16px;
}

.grid-wrap {
    display: flex;
    height: 276px;
    overflow: hidden;
}

.grid {
    flex: none;
    table-layout: fixed;
    width: 270px;
    height: 0;
    margin-left: -87px;
    border-collapse: collapse;
    background-color: #fdfdfd;
    white-space: nowrap;
}

.grid .name {
    width: 125px;
}

.grid .value {
    width: 132px;
}

.grid .link {
    width: 13px;
}

.grid td, .grid th {
    height: 20px;
    padding: 0 2px;
    line-height: 17px;
    border: 1px dotted #777;
}

.grid th {
    border: none;
    background-color: #d9d9d9;
}

.grid th svg {
    width: 8px;
    height: 10px;
    margin: 0 4px 0 auto;
    stroke: #000;
}

.grid .dim {
    color: #777;
}

.grid td:last-child, .grid td:has(input), .grid td:has(button) {
    padding: 0;
}

.grid input {
    display: block;
    width: 100%;
    height: 19px;
    padding: 0 6px;
    border: 1px solid #000;
}

.grid button {
    display: block;
    width: 100%;
    height: 19px;
    text-align: center;
    background-color: #e2e1e3;
    border: 1px solid #bbb;
    border-width: 1px 2px 2px 1px;
    border-bottom-color: #999;
}

.scrollbar {
    display: flex;
    flex-direction: column;
    align-items: center;
    width: 17px;
    padding: 7px 0 5px;
}

.scrollbar svg {
    width: 10px;
    height: 6px;
    stroke: #555;
    stroke-width: 2;
}

.thumb {
    width: 15px;
    height: 80px;
    margin: 4px 0 auto;
    background-color: #cdcdcd;
}

.apply-row {
    display: flex;
    justify-content: flex-end;
    height: 25px;
    margin-right: 2px;
    padding: 2px 2px 3px;
    border: 1px solid #ddd;
    border-width: 0 1px 1px 0;
}

.apply-row button {
    width: 73px;
    color: #888;
    background-color: #ccc;
    border: 1px solid #bbb;
}

.browser {
    flex: 1;
}

.tree {
    list-style: none;
    height: 100%;
    margin: 3px 2px 0 0;
    border-top: 1px solid #777;
    border-right: 1px solid #ddd;
    background-color: #fdfdfd;
    white-space: nowrap;
}

.tree li {
    height: 20px;
    margin-left: -51px;
    line-height: 20px;
}

.tree .child {
    margin-left: -47px;
}

.tree .selected {
    display: inline-block;
    height: 18px;
    padding-right: 3px;
    background-color: #dddce3;
}

/* drawing view */
.view {
    flex: 1;
    display: flex;
    flex-direction: column;
    min-width: 0;
    border-left: 2px solid #777;
    border-top: 2px solid #777;
    background-color: #fdfdfd;
}

.drawing {
    position: relative;
    flex: 1;
    min-height: 0;
    overflow: hidden;
}

.axis {
    stroke: #000;
    stroke-dasharray: 18 4 4 4;
    shape-rendering: crispEdges;
}

.bubble {
    stroke: #000;
    fill: #fdfdfd;
}

.mark {
    font-size: 7px;
    text-anchor: middle;
    stroke: none;
    fill: #000;
}

.watermark {
    position: absolute;
    left: -2px;
    bottom: 56px;
    font-family: "Liberation Mono", "Noto Sans CJK SC", monospace;
    font-size: 32px;
    line-height: 40px;
    color: #c81414;
}

.watermark span {
    font-size: 28px;
}

.view-bar {
    display: flex;
    align-items: center;
    height: 20px;
    padding-bottom: 3px;
    color: #000;
    background-color: #f2f0f3;
}

.scale {
    width: 76px;
    padding-right: 14px;
    font-family: "DejaVu Sans", sans-serif;
    font-size: 11px;
    text-align: right;
}

.view-tools {
    display: flex;
}

.view-tools button {
    width: 21px;
}

.view-tools svg {
    width: 16px;
    height: 16px;
    margin: 0 auto;
}

.h-scroll {
    flex: 1;
    display: flex;
    justify-content: center;
}

.h-thumb {
    width: 17px;
    height: 15px;
    margin-left: 56px;
    background-color: #cbcbcb;
}

/* status bar */
.status {
    display: flex;
    align-items: center;
    height: 24px;
    color: #000;
    background-color: #d4d4d4;
    border-top: 1px solid #888;
}

.hint {
    flex: 1;
    margin-left: -2px;
    white-space: nowrap;
}

.status svg {
    width: 16px;
    height: 16px;
}

.status > svg {
    margin: 0 8px;
}

.status .strong {
    margin-right: 4px;
}

.status .combo {
    width: 204px;
    height: 18px;
}

.status .combo svg {
    width: 10px;
    height: 6px;
}

.status .pale {
    stroke: #999;
}

.count {
    width: 20px;
}

.select-tools {
    display: flex;
    justify-content: flex-end;
    width: 330px;
}

.select-tools button {
    width: 26px;
}

.select-tools svg {
    margin: 0 auto;
}

/* taskbar */
.taskbar {
    display: flex;
    justify-content: space-between;
    height: 40px;
    background: linear-gradient(to right, #0c1d25 0 20%, #18211f 45%, #121e20 65%, #04141a 85%);
}

.taskbar svg {
    stroke: none;
    margin: 0 auto;
}

.apps {
    display: flex;
    gap: 5px;
    padding-left: 4px;
}

.app {
    display: flex;
    align-items: center;
    width: 44px;
    border-bottom: 2px solid transparent;
}

.app svg {
    width: 24px;
    height: 24px;
}

.app.open {
    border-bottom-color: #bbb;
}

.app.active {
    background: linear-gradient(to bottom, transparent 8px, #3c484e 8px);
}

.tray {
    display: flex;
    align-items: center;
    gap: 6px;
    padding-right: 5px;
}

.tray svg {
    width: 18px;
    height: 18px;
}
```
